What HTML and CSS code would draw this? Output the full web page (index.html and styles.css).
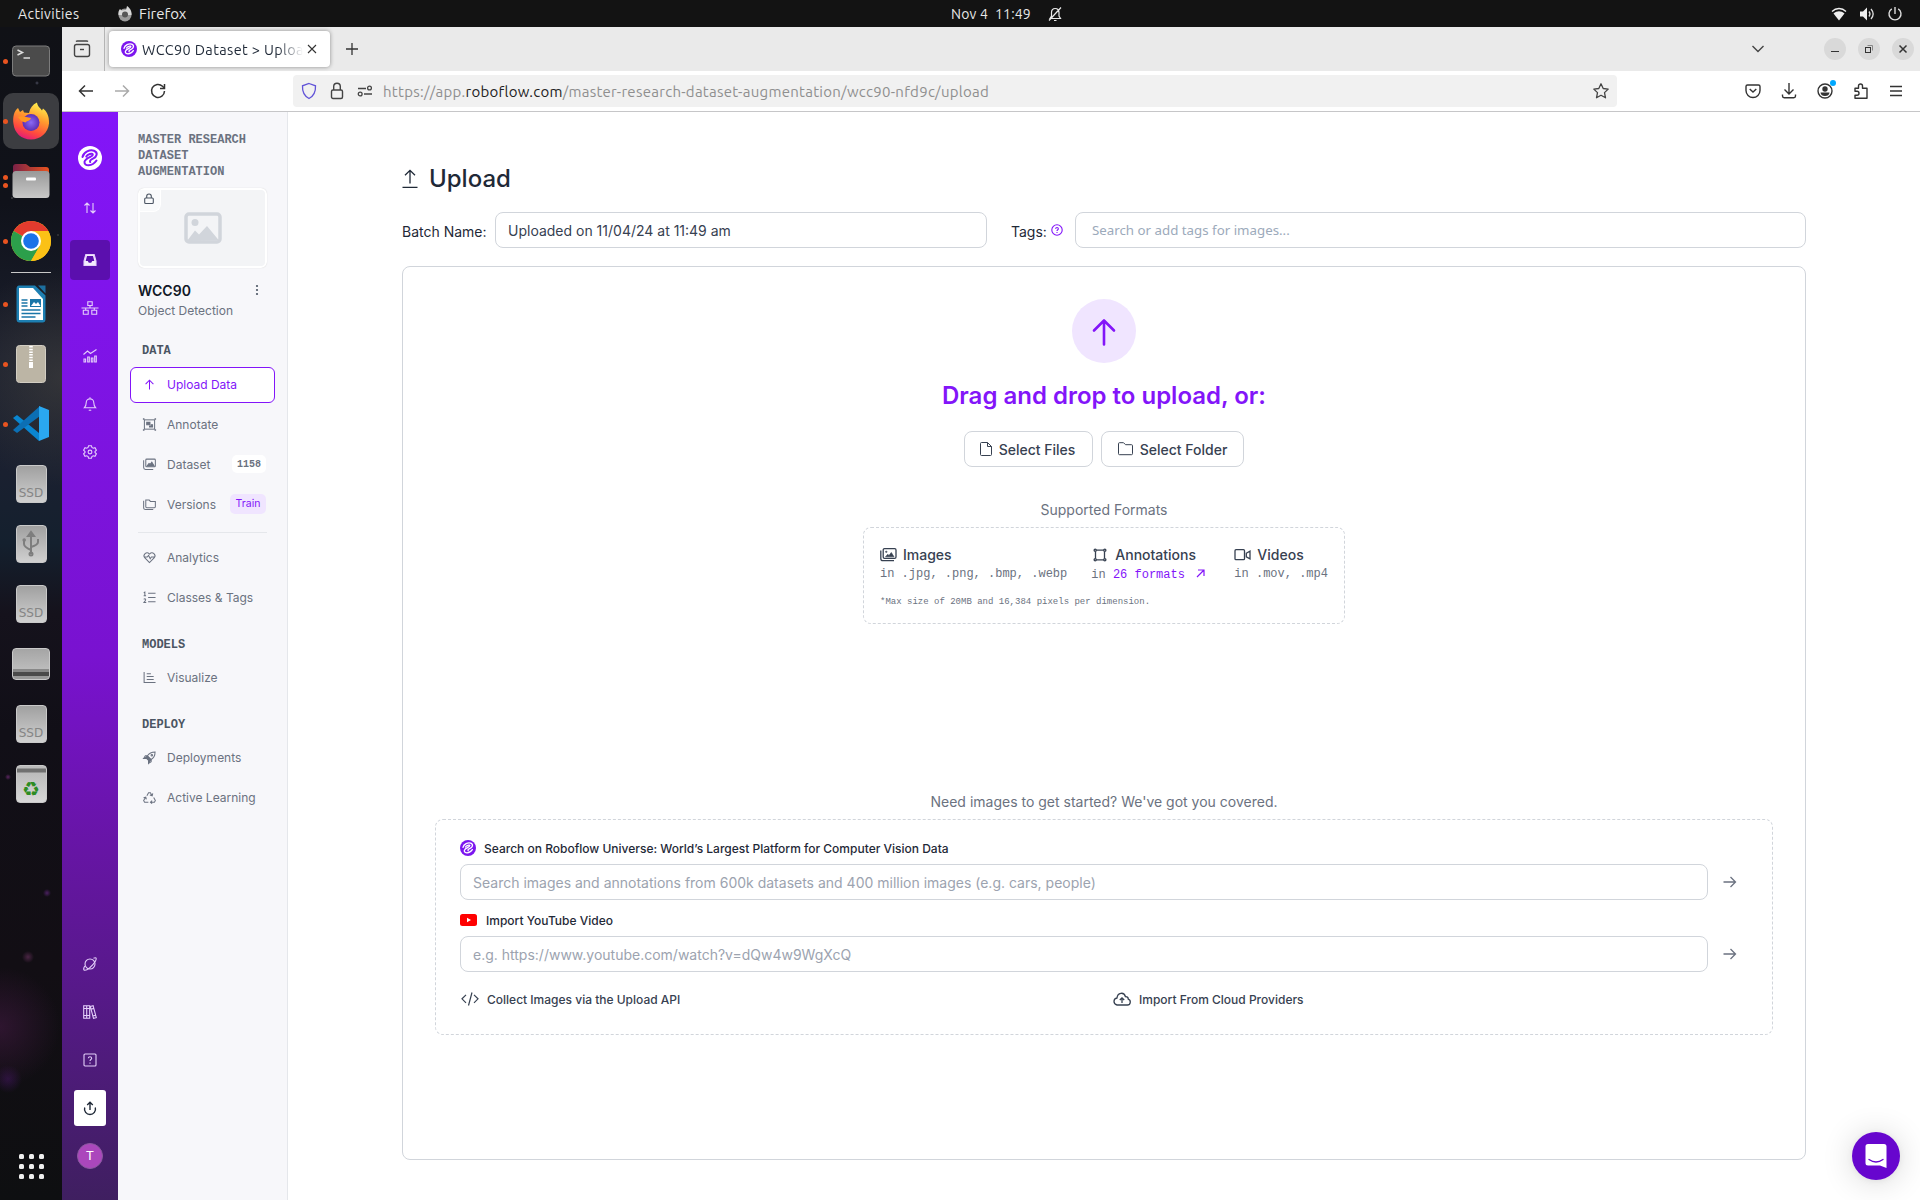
FILE: index.html
```html
<!DOCTYPE html>
<html lang="en">

<head>
    <meta charset="UTF-8">
    <meta name="viewport" content="width=device-width, initial-scale=1.0">
    <title>WCC90 Dataset &gt; Upload</title>
    <link rel="stylesheet" href="styles.css">
</head>

<body>
    <!-- Shared logo -->
    <svg class="defs" width="0" height="0">
        <symbol id="logo" viewBox="0 0 24 24">
            <circle cx="12" cy="12" r="12" fill="var(--disc)" />
            <g fill="none" stroke="var(--line)" stroke-width="2" stroke-linecap="round">
                <path d="M4.500 11C5.500 6 12 3.300 16 4.700c4.500 1.800 2.800 6.300-1 8-2.500 1.200-3.500 2-2.800 3.300" />
                <path d="M8.300 10.500C9.500 8 14.500 6.800 14.800 8.600c.3 2-7.800 3.200-8.300 7.200-.5 4.500 7.500 5.200 12-1.300" />
            </g>
        </symbol>
    </svg>

    <header class="topbar">
        <div class="topbar-left">
            <span class="activities">Activities</span>
            <svg width="16" height="16" viewBox="0 0 16 16"><circle cx="8" cy="9" r="6.500" fill="#9a9a9a" /><path d="M1.500 9C1 6 2 4 3 3l1.500 1.500L9 4l1-4c3 2 5 5 4.500 9z" fill="#d8d8d8" /><circle cx="8" cy="8.500" r="3" fill="#555" /></svg>
            <span class="app-name">Firefox</span>
        </div>
        <div class="topbar-center">
            <span class="clock">Nov 4&nbsp; 11:49</span>
            <svg width="16" height="16" viewBox="0 0 16 16" fill="none" stroke="#e8e8e8" stroke-width="1.200"><path d="M3 12.500h10.500L12 10V6.500C12 4 10.500 2.500 8.200 2.500S4.500 4 4.500 6.500V10zM14 1.500l-12 13M7 14.500h2.500" /></svg>
        </div>
        <div class="topbar-right">
            <svg width="16" height="16" viewBox="0 0 16 16"><path d="M1 5.500C5 1.500 11 1.500 15 5.500" fill="none" stroke="#eee" stroke-width="1.300" /><path d="M2.500 7.500c3.500-3 7.500-3 11 0L8 14.500z" fill="#eee" /></svg>
            <svg width="16" height="16" viewBox="0 0 16 16"><path d="M1 5.500h3l4-4v13l-4-4H1z" fill="#eee" /><path d="M10 5.500c1.200 1.500 1.200 3.500 0 5M12 3c2.600 3 2.600 7 0 10" fill="none" stroke="#ddd" stroke-width="1.300" /></svg>
            <svg width="16" height="16" viewBox="0 0 16 16" fill="none" stroke="#ddd" stroke-width="1.400"><path d="M8 1v7M4.800 2.800a6 6 0 1 0 6.400 0" /></svg>
        </div>
    </header>

    <div class="desktop">
        <nav class="dock">
            <div class="dock-item running">
                <svg width="38" height="32" viewBox="0 0 38 32"><rect x=".5" y="1" width="37" height="30" rx="3.500" fill="#4b4b4b" stroke="#7c7c7c" /><path d="M5.500 5l5 2.500-5 2.500M11.500 13H18" fill="none" stroke="#ddd" stroke-width="1.500" /></svg>
            </div>
            <div class="dock-item running active">
                <svg width="38" height="38" viewBox="0 0 38 38">
                    <defs>
                        <linearGradient id="ff" x1=".7" y1="0" x2=".3" y2="1"><stop offset="0" stop-color="#fff44f" /><stop offset=".4" stop-color="#ff9a2e" /><stop offset=".75" stop-color="#ff4a3e" /><stop offset="1" stop-color="#e2177e" /></linearGradient>
                        <radialGradient id="ffg"><stop offset="0" stop-color="#8b6af5" /><stop offset="1" stop-color="#5b2fb4" /></radialGradient>
                    </defs>
                    <path d="M1.500 22C.5 15 2 9 6 6l2 4 3-2 1 2.500 5 .5c1-5 3.500-8.500 8-10.500.5 4 3 5 5 8l1-2c3 2 6.500 7 6 15-1 9.500-8.500 16-18 16S2.500 31 1.500 22z" fill="url(#ff)" />
                    <circle cx="19" cy="20.500" r="8.500" fill="url(#ffg)" />
                    <path d="M6 15c4-2 8 0 13 1-1 3-4 2.500-5.500 4.500C10 20 8 18 6 15z" fill="#ff9722" />
                </svg>
            </div>
            <div class="dock-item running two">
                <svg width="38" height="36" viewBox="0 0 38 36"><defs><linearGradient id="fl"><stop offset="0" stop-color="#7b2147" /><stop offset="1" stop-color="#e95420" /></linearGradient><linearGradient id="gr" x2="0" y2="1"><stop offset="0" stop-color="#999" /><stop offset="1" stop-color="#c8c8c8" /></linearGradient></defs><path d="M1 12V4q0-3 3-3h10l4 3h16q3 0 3 3v7z" fill="url(#fl)" /><rect x=".5" y="8" width="37" height="27" rx="3.500" fill="url(#gr)" /><rect x="14" y="14.500" width="10" height="3" rx="1" fill="#fff" /></svg>
            </div>
            <div class="dock-item running">
                <svg width="40" height="40" viewBox="0 0 40 40"><circle cx="20" cy="20" r="20" fill="#fbc116" /><path d="M20 20L2.700 10A20 20 0 0 1 37.300 10H20z" fill="#e33b2e" /><path d="M2.700 10A20 20 0 0 0 20 40l8.700-15L20 20z" fill="#2c9f4b" /><path d="M20 10h17.300A20 20 0 0 1 20 40l8.700-15z" fill="#fbc116" /><circle cx="20" cy="20" r="10" fill="#fff" /><circle cx="20" cy="20" r="7.800" fill="#1a73e8" /></svg>
            </div>
            <div class="dock-line"></div>
            <div class="dock-item running">
                <svg width="30" height="38" viewBox="0 0 30 38"><path d="M3 .5h16l10.500 10V34q0 3.500-3 3.500h-23q-3 0-3-3.500V4q0-3.500 2.500-3.500z" fill="#1d7fb2" /><path d="M3 3h14l10 11v21H3z" fill="#fff" /><path d="M22 .5h7.500v8z" fill="#1c6f9f" /><path d="M5.500 15h6M5.500 18h6M5.500 21h6M5.500 25h19M5.500 28.500h19M5.500 32h14" stroke="#1a76a8" stroke-width="1.500" /><rect x="14" y="14" width="11" height="8" fill="#1a76a8" /><path d="M15 21l3-4 2 2 2-2 2.500 4z" fill="#fff" /></svg>
            </div>
            <div class="dock-item running">
                <svg width="30" height="38" viewBox="0 0 30 38"><rect x=".5" y=".5" width="29" height="37" rx="3" fill="#bcb5a5" stroke="#d2cdc2" /><path d="M15 1v17" stroke="#fff" stroke-width="3.500" stroke-dasharray="1.500 1.200" /><rect x="13" y="17" width="4" height="6" fill="#fff" /></svg>
            </div>
            <div class="dock-item running">
                <svg width="36" height="36" viewBox="0 0 36 36"><path d="M0 12l4-3 22 18v8z" fill="#0a86d1" /><path d="M0 24l4 3L27 10V0z" fill="#0c6fb4" /><path d="M26 0l10 4v27l-10 4z" fill="#2aa7f0" /></svg>
            </div>
            <div class="dock-item"><div class="drive">SSD</div></div>
            <div class="dock-item"><div class="drive usb">
                <svg width="18" height="26" viewBox="0 0 18 26" fill="none" stroke="#7e7e7e" stroke-width="2"><path d="M9 4v19M2 9v4q0 3 7 6M16 8v3q0 3-7 5" /><path d="M6 5l3-4 3 4z" fill="#7e7e7e" /><circle cx="9" cy="23" r="1.500" /><circle cx="2.200" cy="9" r=".8" /></svg>
            </div></div>
            <div class="dock-item"><div class="drive">SSD</div></div>
            <div class="dock-item"><div class="drive disk"></div></div>
            <div class="dock-item"><div class="drive">SSD</div></div>
            <div class="dock-item"><div class="drive trash">&#9851;</div></div>
            <div class="app-grid"><i></i><i></i><i></i><i></i><i></i><i></i><i></i><i></i><i></i></div>
        </nav>

        <div class="window">
            <div class="tabbar">
                <div class="recent">
                    <svg width="18" height="18" viewBox="0 0 18 18" fill="none" stroke="#444" stroke-width="1.400"><path d="M3 1.500Q3.500 1 4.500 1h9q1 0 1.500.5" /><rect x="1.500" y="4.500" width="15" height="12" rx="2" /><path d="M7 9.500h4" /></svg>
                </div>
                <div class="tab">
                    <svg class="tab-logo" width="16" height="16"><use href="#logo" /></svg>
                    <span class="tab-title">WCC90 Dataset &gt; Upload</span>
                    <svg width="10" height="10" viewBox="0 0 10 10" stroke="#333" stroke-width="1.100"><path d="M1 1l8 8M9 1L1 9" /></svg>
                </div>
                <svg class="plus" width="12" height="12" viewBox="0 0 12 12" stroke="#333" stroke-width="1.300"><path d="M6 0v12M0 6h12" /></svg>
                <div class="win-controls">
                    <svg class="chev" width="14" height="8" viewBox="0 0 14 8" fill="none" stroke="#444" stroke-width="1.400"><path d="M1.500 1L7 6.500 12.500 1" /></svg>
                    <span class="win-btn"><svg width="10" height="10" viewBox="0 0 10 10" stroke="#333"><path d="M1 7.500h8" /></svg></span>
                    <span class="win-btn"><svg width="10" height="10" viewBox="0 0 10 10" fill="none" stroke="#333"><rect x="1.500" y="3.500" width="5" height="5" /><path d="M3.500 1.500h5v5" stroke="#888" /></svg></span>
                    <span class="win-btn"><svg width="10" height="10" viewBox="0 0 10 10" stroke="#333" stroke-width="1.500"><path d="M1.500 1.500l7 7M8.500 1.500l-7 7" /></svg></span>
                </div>
            </div>

            <div class="navbar">
                <div class="nav-buttons">
                    <svg width="16" height="16" viewBox="0 0 16 16" fill="none" stroke="#333" stroke-width="1.500"><path d="M15 8H1.500M7 2.500L1.500 8 7 13.500" /></svg>
                    <svg width="16" height="16" viewBox="0 0 16 16" fill="none" stroke="#aaa" stroke-width="1.500"><path d="M1 8h13.500M9 2.500L14.500 8 9 13.500" /></svg>
                    <svg width="16" height="16" viewBox="0 0 16 16" fill="none" stroke="#333" stroke-width="1.500"><path d="M14.500 8A6.500 6.500 0 1 1 12.500 3.200l1.500 1.500" /><path d="M14.500 1v4.500H10" /></svg>
                </div>
                <div class="urlbar">
                    <svg width="16" height="18" viewBox="0 0 16 18" fill="none" stroke="#6254d8" stroke-width="1.300"><path d="M8 1.500l6.500 2.300c.3 6-1.500 10.200-6.500 12.700-5-2.500-6.800-6.700-6.500-12.700z" /></svg>
                    <svg width="14" height="18" viewBox="0 0 14 18" fill="none" stroke="#444" stroke-width="1.400"><rect x="1.500" y="8" width="11" height="8.500" rx="1.500" /><path d="M3.700 8V4.500a3.300 3.300 0 0 1 6.600 0V8" /></svg>
                    <svg width="16" height="12" viewBox="0 0 16 12" fill="none" stroke="#444" stroke-width="1.300"><path d="M1 3.500h8M7 9h8" /><circle cx="12.500" cy="3" r="1.900" /><circle cx="3.200" cy="9" r="1.900" /></svg>
                    <span class="url">https://app.<b>roboflow.com</b>/master-research-dataset-augmentation/wcc90-nfd9c/upload</span>
                    <svg class="star" width="18" height="18" viewBox="0 0 18 18" fill="none" stroke="#444" stroke-width="1.300" stroke-linejoin="round"><path d="M9 1.800l2.200 4.700 5 .6-3.700 3.500 1 5.200L9 13.300l-4.500 2.500 1-5.200L1.800 7.100l5-.6z" /></svg>
                </div>
                <div class="nav-tools">
                    <svg width="16" height="16" viewBox="0 0 16 16" fill="none" stroke="#333" stroke-width="1.400"><path d="M2.500 2h11q1.500 0 1.500 1.500v4a7 7 0 0 1-14 0v-4Q1 2 2.500 2z" /><path d="M4.700 6L8 9l3.300-3" /></svg>
                    <svg width="16" height="16" viewBox="0 0 16 16" fill="none" stroke="#333" stroke-width="1.400"><path d="M8 0v10.500M3.500 6.500L8 11l4.500-4.500M1.500 11.500v1.500q0 1.700 1.700 1.700h9.600q1.700 0 1.700-1.700v-1.500" /></svg>
                    <span class="account">
                        <svg width="16" height="16" viewBox="0 0 16 16"><circle cx="8" cy="8" r="7" fill="none" stroke="#333" stroke-width="1.400" /><circle cx="8" cy="6" r="2.700" fill="#333" /><path d="M3.500 9.500h9q-.5 3.500-4.500 3.500t-4.500-3.500z" fill="#333" /></svg>
                    </span>
                    <svg width="16" height="16" viewBox="0 0 16 16" fill="none" stroke="#333" stroke-width="1.400"><path d="M2 5.200h3.500V3a2 2 0 0 1 4 0v2.200H14v10H2v-3h2a2 2 0 0 0 0-4H2z" stroke-linejoin="round" /></svg>
                    <svg width="14" height="12" viewBox="0 0 14 12" stroke="#333" stroke-width="1.400"><path d="M1 1.500h12M1 6h12M1 10.500h12" /></svg>
                </div>
            </div>

            <div class="app">
                <nav class="rail">
                    <svg class="rail-logo" width="24" height="24"><use href="#logo" /></svg>
                    <a class="rail-item first"><svg viewBox="0 0 14 14"><path d="M4 12V2M1.500 4.500L4 2l2.500 2.500M10 2v10M7.500 9.500L10 12l2.500-2.500" /></svg></a>
                    <a class="rail-item active"><svg viewBox="0 0 14 14"><path d="M2.800 1.500h8.400L13 8v4.500H1V8z" fill="#f3eafc" /><path d="M4 3h6l1.300 5H9.200l-1 1.700H5.800L4.800 8H2.700z" fill="#5b0fae" stroke="none" /></svg></a>
                    <a class="rail-item"><svg class="wide" viewBox="0 0 18 14"><path d="M6.800.8h4.400v3.700H6.800zM2.300 9.300H7.200v3.900H2.300zM10.800 9.300h4.900v3.900h-4.900zM9 4.500v2.500M.5 7h17M4.700 7v2.300M13.300 7v2.300" /></svg></a>
                    <a class="rail-item"><svg viewBox="0 0 14 14"><path d="M.5 5.500L4.500 2l3 2.500 6-4M1 10h1.600v3H1zM4.700 8h1.600v5H4.700zM8.300 9h1.600v4H8.300zM11.700 7h1.600v6h-1.600z" /></svg></a>
                    <a class="rail-item"><svg viewBox="0 0 14 14"><path d="M7 .3v1.200M1.300 10.800h11.400C11 9 10.800 8 10.800 5.700a3.800 3.800 0 0 0-7.600 0C3.200 8 3 9 1.300 10.800zM5.800 12.800q1.200 1 2.400 0" /></svg></a>
                    <a class="rail-item"><svg viewBox="0 0 14 14"><path d="M5.600.7h2.800l.5 1.800 1.300.7 1.800-.5 1.400 2.500L12 6.500v1l1.400 1.300-1.400 2.500-1.800-.5-1.300.7-.5 1.800H5.600l-.5-1.800-1.300-.7-1.800.5L.6 8.800 2 7.500v-1L.6 5.200 2 2.700l1.800.5 1.300-.7z" /><circle cx="7" cy="7" r="1.900" /></svg></a>
                    <div class="rail-bottom">
                        <a class="rail-item"><svg viewBox="0 0 14 14"><circle cx="7" cy="7" r="5" /><path d="M10.500 1.200q4.200-1.500 2 2.800Q10.500 7.500 6.500 11q-4 3.200-5.500 2-1-1.200.8-4" /></svg></a>
                        <a class="rail-item"><svg viewBox="0 0 14 14"><path d="M.7.7h3v12.600h-3zM3.700.7h3v12.600h-3zM7.300 1.500l2.800-.8 3.200 12-2.800.7zM.7 3.500h6M.7 10.500h6M8 4.200l2.800-.8M9.800 11l2.800-.8" /></svg></a>
                        <a class="rail-item"><svg viewBox="0 0 14 14"><rect x="1" y="1" width="12" height="12" rx="1" /><path d="M5.300 5.300Q5.500 3.700 7 3.700t1.700 1.500C8.700 6.500 7 6.500 7 8M7 9.500v1.200" /></svg></a>
                        <a class="share"><svg width="14" height="14" viewBox="0 0 14 14" fill="none" stroke="#1f2937" stroke-width="1.400"><path d="M7 9V1.500M4.200 4L7 1.300 9.800 4M1.700 6.500a5.500 5.500 0 1 0 10.600 0" /></svg></a>
                        <span class="avatar">T</span>
                    </div>
                </nav>

                <aside class="sidebar">
                    <div class="workspace">MASTER RESEARCH DATASET AUGMENTATION</div>
                    <div class="thumb">
                        <span class="lock"><svg width="10" height="12" viewBox="0 0 10 12" fill="none" stroke="#4b5563" stroke-width="1.100"><rect x=".7" y="5" width="8.600" height="5.500" rx="1" /><path d="M2.700 5V3.300a2.300 2.300 0 0 1 4.600 0V5" /></svg></span>
                        <svg width="38" height="32" viewBox="0 0 38 32"><rect x="2" y="2" width="34" height="28" rx="3" fill="none" stroke="#d1d5db" stroke-width="3.500" /><circle cx="11" cy="10.500" r="3.500" fill="#d1d5db" /><path d="M3 29l8-10.500 4 4L23 14l12 14.500z" fill="#d1d5db" /></svg>
                    </div>
                    <div class="project"><span>WCC90</span><svg width="4" height="12" viewBox="0 0 4 12" fill="#4b5563"><circle cx="2" cy="2" r="1.100" /><circle cx="2" cy="6" r="1.100" /><circle cx="2" cy="10" r="1.100" /></svg></div>
                    <div class="project-type">Object Detection</div>

                    <h3>DATA</h3>
                    <a class="item active"><svg viewBox="0 0 14 14"><path d="M7 12.500v-10M2.800 6.500L7 2.300l4.200 4.200" /></svg>Upload Data</a>
                    <a class="item"><svg viewBox="0 0 14 14"><rect x="1.500" y="2" width="11" height="10" /><path d="M4 4.700h3.500v2.600H4z" fill="#6b7280" /><path d="M8.800 7.200h1.500v2.600H7V8.500h1.800z" fill="#6b7280" /><path d="M.7 1.200h.1M13.200 1.200h.1M.7 12.800h.1M13.200 12.800h.1" stroke-linecap="square" stroke-width="1.600" /></svg>Annotate</a>
                    <a class="item"><svg viewBox="0 0 14 14"><rect x="3" y="1.200" width="10.300" height="8.300" rx="1" /><path d="M.7 2.500v7.800q0 2 2 2H11" /><path d="M4.500 8.500l2-2.500 1.200 1 1.800-2.500 2.500 4z" fill="#6b7280" /></svg>Dataset<span class="count">1158</span></a>
                    <a class="item"><svg viewBox="0 0 14 14"><path d="M3 9.500V2.200h3.700L8 3.700h5.300v5.800q0 1-1 1H4q-1 0-1-1zM.7 3v7.500q0 2 2 2H11" /></svg>Versions<span class="train">Train</span></a>
                    <hr>
                    <a class="item"><svg viewBox="0 0 14 14"><path d="M7 12.500L1.800 7.200C-.5 4.500 3.500-.2 7 3.300c3.500-3.500 7.500 1.200 5.200 3.900zM1 6.500h3.500L6 4.800l1.800 3.500L9 6.500h4" /></svg>Analytics</a>
                    <a class="item"><svg viewBox="0 0 14 14"><path d="M5.500 2.500h8M5.500 7h8M5.500 11.500h8M.8 1.800L2 1.200v4M.7 5.200h2.600M.8 9q1-1 2-.3c.7 1-.5 2-1.800 3.800h2.500" /></svg>Classes &amp; Tags</a>
                    <h3 class="gap">MODELS</h3>
                    <a class="item"><svg viewBox="0 0 14 14"><path d="M1.200 1v11.500h12.300M4 3h4.500M4 6h7.500M4 9.200h7.500" /></svg>Visualize</a>
                    <h3 class="gap">DEPLOY</h3>
                    <a class="item"><svg viewBox="0 0 14 14"><path d="M13 1C9 1 6.500 2.500 4.800 5.200L8.800 9.200C11.500 7.500 13 5 13 1zM4.800 5.200H2.500L.8 8h3M8.800 9.200v2.300L6 13.300v-3" /><path d="M4.500 5.500L1 8h2.800L6 10.200V13l2.500-3.500z" fill="#6b7280" /><circle cx="9.500" cy="4.500" r=".8" /></svg>Deployments</a>
                    <a class="item"><svg viewBox="0 0 14 14"><path d="M4.200 5L6 1.800h2L9.700 5M10.500 2.500L9.900 5.200l-2.500-.8M11.500 7l1.800 3.300-1 1.700H8.500M9.800 10.300L8 12l1.800 1.700M5.800 12H1.700l-1-1.700L2.800 6.800M.6 7.300l2.400-.7.600 2.500" /></svg>Active Learning</a>
                </aside>

                <main>
                    <h1><svg width="16" height="20" viewBox="0 0 16 20" fill="none" stroke="#1f2937" stroke-width="1.300"><path d="M8 14.500V1.500M3 6.300l5-5 5 5M.5 18.300h15" /></svg>Upload</h1>
                    <div class="fields">
                        <label for="batch">Batch Name:</label>
                        <input id="batch" class="batch" type="text" value="Uploaded on 11/04/24 at 11:49 am">
                        <label class="tags-label" for="tags">Tags: <svg width="12" height="12" viewBox="0 0 12 12" fill="none" stroke="#8315f9" stroke-width="1.100"><circle cx="6" cy="6" r="5.200" /><path d="M4.600 4.900Q4.700 3.500 6 3.500t1.400 1.300C7.400 5.800 6 5.700 6 7M6 8v1" /></svg></label>
                        <input id="tags" class="tags" type="text" placeholder="Search or add tags for images...">
                    </div>

                    <section class="dropzone">
                        <div class="circle"><svg width="26" height="28" viewBox="0 0 26 28" fill="none" stroke="#8315f9" stroke-width="2.600" stroke-linecap="round" stroke-linejoin="round"><path d="M13 26.500V2.500M3 12.500l10-10 10 10" /></svg></div>
                        <h2>Drag and drop to upload, or:</h2>
                        <div class="buttons">
                            <button><svg width="12" height="14" viewBox="0 0 12 14" fill="none" stroke="#374151"><path d="M1.500.5h6l4 4v8q0 1-1 1h-9q-1 0-1-1v-11q0-1 1-1zM7.500.5v4h4" /></svg>Select Files</button>
                            <button class="folder"><svg width="15" height="14" viewBox="0 0 15 14" fill="none" stroke="#374151"><path d="M1.500.7h4l2 2h6q1 0 1 1v8q0 1-1 1h-12q-1 0-1-1v-10q0-1 1-1z" /></svg>Select Folder</button>
                        </div>
                        <p class="caption">Supported Formats</p>
                        <div class="formats">
                            <div class="format-row">
                                <div>
                                    <h4><svg width="17" height="14" viewBox="0 0 17 14" fill="none" stroke="#374151" stroke-width="1.300"><rect x="3.200" y=".7" width="12.800" height="9.600" rx="1.300" /><path d="M.8 2.500v8q0 2.200 2.200 2.200h11" /><path d="M5.500 8.800l2.300-2.500L9 7.500l2.300-3 2.700 4.300z" fill="#374151" stroke-width=".6" /><circle cx="6.300" cy="3.700" r=".4" /></svg>Images</h4>
                                    <p>in .jpg, .png, .bmp, .webp</p>
                                </div>
                                <div class="annotations">
                                    <h4><svg width="14" height="14" viewBox="0 0 14 14" fill="none" stroke="#374151" stroke-width="1.300"><path d="M3.200 2.200h7.600M3.200 11.800h7.600M2.500 3.500v7M11.500 3.500v7" /><circle cx="2.200" cy="2.200" r="1.100" /><circle cx="11.800" cy="2.200" r="1.100" /><circle cx="2.200" cy="11.800" r="1.100" /><circle cx="11.800" cy="11.800" r="1.100" /></svg>Annotations</h4>
                                    <p>in <a>26 formats <svg width="9" height="9" viewBox="0 0 9 9" fill="none" stroke="#8315f9" stroke-width="1.200"><path d="M1 8l7-7M2 1h6v6" /></svg></a></p>
                                </div>
                                <div>
                                    <h4><svg width="17" height="14" viewBox="0 0 17 14" fill="none" stroke="#374151" stroke-width="1.300"><rect x="1" y="1.700" width="9.500" height="10" rx="1" /><path d="M12.300 5.200l3.700-2v7.600l-3.700-2z" /></svg>Videos</h4>
                                    <p>in .mov, .mp4</p>
                                </div>
                            </div>
                            <small>*Max size of 20MB and 16,384 pixels per dimension.</small>
                        </div>

                        <p class="caption need">Need images to get started? We've got you covered.</p>
                        <div class="sources">
                            <div class="source-label"><svg class="uni-logo" width="16" height="16"><use href="#logo" /></svg>Search on Roboflow Universe: World’s Largest Platform for Computer Vision Data</div>
                            <div class="source-input">
                                <input type="text" placeholder="Search images and annotations from 600k datasets and 400 million images (e.g. cars, people)">
                                <svg width="14" height="12" viewBox="0 0 14 12"><path d="M.5 6h12M7.500 1l5 5-5 5" /></svg>
                            </div>
                            <div class="source-label yt"><svg width="17" height="12" viewBox="0 0 17 12"><rect width="17" height="12" rx="2.500" fill="#f00" /><path d="M7 3.700v4.600L11 6z" fill="#fff" /></svg>Import YouTube Video</div>
                            <div class="source-input">
                                <input type="text" placeholder="e.g. https://www.youtube.com/watch?v=dQw4w9WgXcQ">
                                <svg width="14" height="12" viewBox="0 0 14 12"><path d="M.5 6h12M7.500 1l5 5-5 5" /></svg>
                            </div>
                            <div class="links">
                                <a><svg width="18" height="14" viewBox="0 0 18 14" fill="none" stroke="#374151" stroke-width="1.200"><path d="M5 2.800L1 6.800l4 4M13 2.800l4 4-4 4M11 .5L7.500 13.500" /></svg>Collect Images via the Upload API</a>
                                <a><svg width="18" height="14" viewBox="0 0 18 14" fill="none" stroke="#374151" stroke-width="1.300"><path d="M4 13h10.500c3 0 4-4.500.8-5.800 0-2-1.500-2.700-2.800-2.500C11-.5 4.500.5 4 6 .2 6.500-.2 12 4 13zM9 11V6M6.800 8L9 5.800 11.200 8" /></svg>Import From Cloud Providers</a>
                            </div>
                        </div>
                    </section>
                    <button class="chat" aria-label="Chat"><svg width="22" height="24" viewBox="0 0 22 24"><path d="M3 0h16q2.500 0 2.500 2.500V24L15 21.500H3Q.5 21.500.5 19V2.500Q.5 0 3 0z" fill="#fff" /><path d="M4 15.500q7 5 14 0" fill="none" stroke="#6706ce" stroke-width="1.300" stroke-linecap="round" /></svg></button>
                </main>
            </div>
        </div>
    </div>
</body>

</html>
```
FILE: styles.css
```css
* {
    box-sizing: border-box;
}

body {
    margin: 0;
    width: 1920px;
    height: 1200px;
    overflow: hidden;
    font-family: Inter, "Liberation Sans", sans-serif;
    font-size: 14px;
    color: #1f2937;
}

svg {
    display: block;
    flex: none;
    overflow: visible;
}

.defs {
    position: absolute;
}

h1, h2, h3, h4, p {
    margin: 0;
}

/* GNOME top bar */
.topbar {
    display: grid;
    grid-template-columns: 1fr auto 1fr;
    align-items: center;
    height: 27px;
    background: #131313;
    color: #e8e8e8;
    font-family: Ubuntu, "Noto Sans", sans-serif;
    font-size: 14px;
}

.topbar-left,
.topbar-center,
.topbar-right {
    display: flex;
    align-items: center;
}

.activities {
    width: 62px;
    margin: 0 38px 0 18px;
    letter-spacing: .4px;
}

.app-name {
    margin-left: 6px;
    font-size: 15px;
}

.topbar-left svg {
    margin-left: -1px;
}

.topbar-center {
    gap: 16px;
    margin-left: 94px;
}

.clock {
    white-space: nowrap;
    letter-spacing: .2px;
}

.topbar-right {
    justify-content: flex-end;
    gap: 12px;
    padding-right: 17px;
}

.desktop {
    display: flex;
    height: 1173px;
}

/* Dock */
.dock {
    display: flex;
    flex-direction: column;
    align-items: center;
    width: 62px;
    padding: 4px 0 21px;
    background:
        radial-gradient(circle at 37px 56px, #4b4d5e, transparent 2px),
        radial-gradient(circle at 12px 171px, #555, transparent 1.5px),
        radial-gradient(circle at 58px 208px, #444, transparent 1.5px),
        radial-gradient(circle at 8px 750px, #5a2560, transparent 3px),
        radial-gradient(circle at 47px 866px, #4a2060, transparent 4px),
        radial-gradient(circle at 28px 930px, #4a2544, transparent 6px),
        radial-gradient(circle at 0 1000px, rgba(75, 28, 75, .5), transparent 60px),
        radial-gradient(circle at 8px 1052px, rgba(55, 20, 80, .7), transparent 14px),
        radial-gradient(circle at 62px 350px, rgba(75, 72, 65, .5), transparent 110px),
        linear-gradient(#101116, #10121a 15%, #1b1f2e 28%, #1a2030 38%, #14202e 44%, #15121c 50%, #110f17 60%, #120e14 80%, #0e0f11);
}

.dock-item {
    position: relative;
    display: flex;
    align-items: center;
    justify-content: center;
    width: 56px;
    height: 56px;
    margin: 2px 0;
    border-radius: 10px;
}

.dock-item.active {
    background: #3c3d41;
}

.running::before {
    content: "";
    position: absolute;
    left: 0;
    top: 26px;
    width: 5px;
    height: 5px;
    border-radius: 50%;
    background: #e95420;
}

.running.two::before {
    top: 22px;
    box-shadow: 0 8px #e95420;
}

.dock-line {
    width: 40px;
    height: 1px;
    margin: 1px 0;
    background: #c8c8c8;
}

.drive {
    display: flex;
    align-items: flex-end;
    justify-content: center;
    width: 31px;
    height: 38px;
    padding-bottom: 2px;
    border: 1px solid #c9c9c9;
    border-radius: 4px;
    background: linear-gradient(#a0a0a0, #d0d0d0);
    color: #858585;
    font: 12px/14px "DejaVu Sans", sans-serif;
}

.drive.usb {
    align-items: center;
    padding: 0;
}

.drive.disk {
    width: 38px;
    height: 32px;
    background: linear-gradient(#a5a5a5, #bbb 65%, #888 66%, #888 75%, #4a4a4a 76%, #4a4a4a 89%, #999 90%);
}

.drive.trash {
    align-items: center;
    padding: 9px 0 0;
    background: linear-gradient(#bbb 2px, #707070 3px, #707070 6px, #bbb 7px, #d8d8d8);
    color: #2c8c22;
    font-size: 20px;
}

.app-grid {
    display: grid;
    grid-template-columns: repeat(3, 5px);
    gap: 5px;
    margin-top: auto;
}

.app-grid i {
    height: 5px;
    border-radius: 1.5px;
    background: #eee;
}

/* Browser window */
.window {
    display: flex;
    flex-direction: column;
    flex: 1;
    background: #fff;
}

.tabbar {
    display: flex;
    align-items: center;
    height: 44px;
    background: #eaeaea;
    font-family: Ubuntu, "Noto Sans", sans-serif;
}

.recent {
    display: flex;
    align-items: center;
    justify-content: center;
    width: 43px;
    height: 44px;
    padding-right: 3px;
    border-right: 1px solid #b5b5b5;
}

.tab {
    display: flex;
    align-items: center;
    width: 221px;
    height: 36px;
    margin-left: 4px;
    padding: 0 13px 0 12px;
    border-radius: 4px;
    background: #fff;
    box-shadow: 0 0 4px rgba(0, 0, 0, .4);
}

.tab-logo,
.uni-logo {
    --disc: #7c15ef;
    --line: #fff;
}

.tab-title {
    flex: 1;
    overflow: hidden;
    margin: 0 4px 0 5px;
    padding-top: 1px;
    white-space: nowrap;
    font-size: 14.5px;
    letter-spacing: .35px;
    -webkit-mask-image: linear-gradient(90deg, #000 84%, transparent);
    mask-image: linear-gradient(90deg, #000 84%, transparent);
}

.plus {
    margin-left: 16px;
}

.win-controls {
    display: flex;
    align-items: center;
    gap: 12px;
    margin-left: auto;
    padding-right: 6px;
}

.chev {
    margin-right: 47px;
}

.win-btn {
    display: flex;
    align-items: center;
    justify-content: center;
    width: 22px;
    height: 22px;
    border-radius: 50%;
    background: #d9d9d9;
}

.navbar {
    display: flex;
    align-items: center;
    height: 41px;
    border-bottom: 1px solid #c6c6c8;
}

.nav-buttons {
    display: flex;
    gap: 20px;
    width: 231px;
    padding-left: 16px;
}

.urlbar {
    display: flex;
    align-items: center;
    width: 1324px;
    height: 32px;
    padding: 0 7px 0 8px;
    border-radius: 4px;
    background: #f1f1f1;
    gap: 13px;
}

.url {
    margin-left: -3px;
    padding-top: 1px;
    color: #8f8f8f;
    font: 15px Ubuntu, "Noto Sans", sans-serif;
    letter-spacing: .27px;
    white-space: nowrap;
}

.url b {
    color: #222;
    font-weight: normal;
}

.star {
    margin-left: auto;
}

.nav-tools {
    display: flex;
    align-items: center;
    gap: 20px;
    margin-left: auto;
    padding-right: 17px;
}

.account {
    position: relative;
}

.account::after {
    content: "";
    position: absolute;
    top: -3px;
    right: -3px;
    width: 6px;
    height: 6px;
    border-radius: 50%;
    background: #00a8ff;
}

/* Roboflow app */
.app {
    display: flex;
    flex: 1;
}

.rail {
    display: flex;
    flex-direction: column;
    align-items: center;
    width: 56px;
    padding: 34px 0 31px;
    background: linear-gradient(#8315f9, #7912d0 50%, #6615a4 68%, #3f1f60);
}

.rail-logo {
    --disc: #fff;
    --line: #8315f9;
}

.rail-item {
    display: flex;
    align-items: center;
    justify-content: center;
    width: 40px;
    height: 40px;
    margin-bottom: 8px;
    border-radius: 4px;
}

.rail-item.first {
    margin: 18px 0 12px;
}

.rail-item.active {
    background: #5b0fae;
}

.rail-item svg {
    width: 14px;
    height: 14px;
    fill: none;
    stroke: #e4cffa;
    stroke-width: 1.100;
}

.rail-item svg.wide {
    width: 18px;
}

.rail-bottom {
    display: flex;
    flex-direction: column;
    align-items: center;
    margin-top: auto;
}

.share {
    display: flex;
    align-items: center;
    justify-content: center;
    width: 32px;
    height: 36px;
    margin-top: 2px;
    border-radius: 3px;
    background: #fff;
}

.avatar {
    width: 26px;
    height: 26px;
    margin-top: 17px;
    border: 1px solid #8b5aa0;
    border-radius: 50%;
    background: #ab47bc;
    color: #fff;
    font: 13px/24px Roboto, sans-serif;
    text-align: center;
}

.sidebar {
    width: 170px;
    padding: 20px 12px 0;
    border-right: 1px solid #e5e7eb;
    background: #f7f7fa;
    color: #6b7280;
    font-size: 12px;
}

.workspace {
    padding: 0 8px;
    font: bold 12px/16px "Liberation Mono", monospace;
}

.thumb {
    position: relative;
    display: flex;
    align-items: center;
    justify-content: center;
    width: 129px;
    height: 80px;
    margin: 8px 8px 0;
    border: 2px solid #fff;
    border-radius: 6px;
    background: #f3f4f6;
    box-shadow: 0 0 1px #ccc;
}

.lock {
    position: absolute;
    top: 0;
    left: 0;
    padding: 3px 6px 6px 4px;
    border-right: 1px solid #fff;
    border-bottom: 1px solid #fff;
    border-radius: 0 0 8px;
    background: #f9fafb;
}

.project {
    display: flex;
    align-items: center;
    justify-content: space-between;
    margin: 13px 16px 0 8px;
    color: #111827;
    font-size: 14px;
    font-weight: 600;
    line-height: 20px;
}

.project svg {
    margin-top: -2px;
}

.project-type {
    margin: 2px 8px 0;
    line-height: 16px;
}

.sidebar h3 {
    margin: 24px 0 8px 12px;
    color: #4b5563;
    font: bold 12px/16px "Liberation Mono", monospace;
}

.sidebar h3.gap {
    margin: 21px 0 7px 12px;
}

.item {
    display: flex;
    align-items: center;
    width: 145px;
    height: 36px;
    margin-bottom: 4px;
    padding: 0 8px 2px 12px;
    border: 1px solid transparent;
    border-radius: 6px;
}

.item svg {
    width: 13px;
    height: 13px;
    margin-right: 11px;
    fill: none;
    stroke: #6b7280;
    stroke-width: 1.100;
}

.item.active {
    border-color: #8315f9;
    background: #fff;
    color: #8315f9;
}

.item.active svg {
    stroke: #8315f9;
}

.count,
.train {
    margin-left: auto;
    border-radius: 5px;
}

.count {
    padding: 1px 5px 0;
    background: #fff;
    font: bold 10px/17px "Liberation Mono", monospace;
}

.train {
    width: 36px;
    background: #f0e5ff;
    color: #8315f9;
    font-size: 10.5px;
    line-height: 20px;
    text-align: center;
}

.sidebar hr {
    height: 1px;
    margin: 9px 8px 7px;
    border: 0;
    background: #e5e7eb;
}

main {
    flex: 1;
    padding: 51px 114px 0;
}

h1 {
    display: flex;
    align-items: center;
    gap: 11px;
    font-size: 24px;
    font-weight: 500;
    line-height: 32px;
}

.fields {
    display: flex;
    align-items: center;
    height: 36px;
    margin: 17px 0 18px;
}

.fields label {
    width: 93px;
    padding-top: 2px;
}

.fields .tags-label {
    display: flex;
    align-items: center;
    gap: 4px;
    width: 64px;
    margin-left: 24px;
}

.tags-label svg {
    margin-top: -2px;
}

input {
    height: 36px;
    padding: 0 12px;
    border: 1px solid #d1d5db;
    border-radius: 8px;
    background: #fff;
    color: #374151;
    font: 14px Inter, sans-serif;
}

input::placeholder {
    color: #9ca3af;
}

.batch {
    width: 492px;
}

.tags {
    flex: 1;
    padding: 0 16px;
    font-family: "Noto Sans", sans-serif;
    font-size: 13.3px;
}

.tags::placeholder {
    color: #9caabb;
}

.dropzone {
    display: flex;
    flex-direction: column;
    align-items: center;
    height: 894px;
    padding: 32px;
    border: 1px solid #d1d5db;
    border-radius: 8px;
}

.circle {
    display: flex;
    align-items: center;
    justify-content: center;
    width: 64px;
    height: 64px;
    padding-top: 2px;
    border-radius: 50%;
    background: #f0e5ff;
}

h2 {
    margin-top: 17px;
    color: #8315f9;
    font-size: 24px;
    font-weight: 600;
    line-height: 32px;
}

.buttons {
    display: flex;
    gap: 8px;
    margin-top: 19px;
}

.buttons button {
    display: flex;
    align-items: center;
    justify-content: center;
    gap: 7px;
    width: 129px;
    height: 36px;
    padding: 0 2px 0 0;
    border: 1px solid #d1d5db;
    border-radius: 8px;
    background: #fff;
    color: #374151;
    font: 500 14px Inter, sans-serif;
}

.buttons .folder {
    width: 143px;
    padding: 0;
}

.caption {
    margin-top: 33px;
    color: #6b7280;
    line-height: 20px;
}

.formats {
    width: 482px;
    height: 97px;
    margin-top: 7px;
    padding: 17px 16px;
    border: 1px dashed #d1d5db;
    border-radius: 8px;
    color: #6b7280;
    font: 12px/18px "Liberation Mono", monospace;
}

.format-row {
    display: flex;
    justify-content: space-between;
}

.formats h4 {
    display: flex;
    align-items: center;
    gap: 6px;
    color: #374151;
    font: 500 14px/20px Inter, sans-serif;
}

.annotations h4 {
    gap: 8px;
    padding-left: 2px;
}

.annotations p {
    line-height: 20px;
}

.annotations {
    width: 119px;
}

.formats a {
    color: #8315f9;
}

.formats a svg {
    display: inline;
    margin-left: 4px;
}

.formats small {
    display: block;
    margin-top: 8px;
    font-size: 9px;
}

.need {
    margin-top: 168px;
}

.sources {
    width: 1338px;
    height: 216px;
    margin-top: 7px;
    padding: 18px 24px;
    border: 1px dashed #d1d5db;
    border-radius: 8px;
}

.source-label {
    display: flex;
    align-items: center;
    gap: 8px;
    height: 20px;
    margin-bottom: 6px;
    color: #1f2937;
    font-size: 12px;
    font-weight: 500;
}

.source-label.yt {
    gap: 9px;
    margin: 10px 0 6px;
}

.source-input {
    display: flex;
    align-items: center;
    gap: 15px;
}

.source-input input {
    width: 1248px;
}

.source-input svg {
    fill: none;
    stroke: #6b7280;
    stroke-width: 1.300;
}

.links {
    display: grid;
    grid-template-columns: 652px auto;
    margin: 17px 0 0 1px;
}

.links a {
    display: flex;
    align-items: center;
    gap: 8px;
    height: 20px;
    color: #374151;
    font-size: 12px;
    font-weight: 500;
}

/* Floats over the page */
.chat {
    position: absolute;
    right: 20px;
    bottom: 20px;
    display: flex;
    align-items: center;
    justify-content: center;
    width: 48px;
    height: 48px;
    padding: 0;
    border: 0;
    border-radius: 50%;
    background: #6706ce;
    box-shadow: 0 1px 6px rgba(0, 0, 0, .06), 0 2px 32px rgba(0, 0, 0, .16);
}
```
